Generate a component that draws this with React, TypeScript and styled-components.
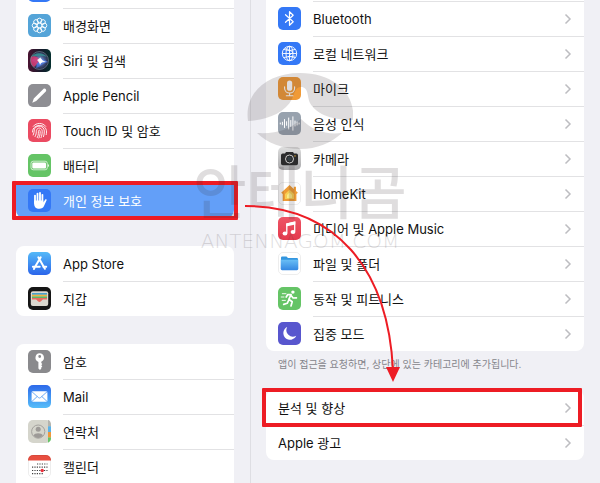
import React from "react";
import styled, { createGlobalStyle, css } from "styled-components";

const GlobalStyle = createGlobalStyle`
  *, *::before, *::after { box-sizing: border-box; }
  html, body, #root { height: 100%; }
  body {
    margin: 0;
    overflow: hidden;
    background: #f0f0f5;
    color: #111;
    font-family: Inter, "Noto Sans CJK KR", sans-serif;
    font-size: 13px;
  }
`;

const Screen = styled.main`
  position: relative;
  display: grid;
  grid-template-columns: 5fr 7fr;
  height: 100vh;
  overflow: hidden;
`;

const Pane = styled.nav<{ $divided?: boolean }>`
  display: flex;
  flex-direction: column;
  padding: 0 16px;
  min-width: 0;
  ${(p) =>
    p.$divided &&
    css`
      padding-left: 15px;
      border-left: 1px solid #dedee3;
    `}
`;

const corners = { top: "0 0 8px 8px", bottom: "8px 8px 0 0", none: "8px" };

const Group = styled.ul<{ $gap: number; $open?: "top" | "bottom" }>`
  flex: none;
  margin: ${(p) => p.$gap}px 0 0;
  padding: 0;
  list-style: none;
  background: #fff;
  border-radius: ${(p) => corners[p.$open ?? "none"]};
`;

const Item = styled.li<{ $inset: number }>`
  position: relative;
  & + &::before {
    content: "";
    position: absolute;
    top: 0;
    left: ${(p) => p.$inset}px;
    right: 0;
    height: 1px;
    background: #e2e2e4;
  }
`;

const RowButton = styled.button<{ $active?: boolean; $marked?: boolean }>`
  position: relative;
  display: flex;
  align-items: center;
  gap: 12px;
  width: 100%;
  height: 35px;
  padding: 0 12px;
  border: 0;
  background: ${(p) => (p.$active ? "#639ff8" : "transparent")};
  border-radius: ${(p) => (p.$active ? "0 0 8px 8px" : "0")};
  color: ${(p) => (p.$active ? "#fff" : "inherit")};
  font: inherit;
  line-height: 20px;
  text-align: left;
  cursor: pointer;
  ${(p) =>
    p.$marked &&
    css`
      z-index: 1;
      &::after {
        content: "";
        position: absolute;
        inset: -2px ${p.$active ? -4 : 2}px -2px -4px;
        border: 4px solid #ed1c24;
        border-radius: 1px;
      }
    `}
`;

const RowLabel = styled.span`
  flex: 1;
  min-width: 0;
  white-space: nowrap;
`;

const Tile = styled.svg`
  flex: none;
  width: 23px;
  height: 23px;
  display: block;
`;

const Chevron = styled.svg`
  flex: none;
  width: 8px;
  height: 12px;
`;

const Footnote = styled.p`
  margin: 4px 0 0;
  padding: 0 12px;
  color: #85858b;
  font-size: 10px;
  line-height: 18px;
  white-space: nowrap;
`;

const Watermark = styled.div`
  position: absolute;
  z-index: 2;
  top: 73px;
  left: 0;
  width: 100%;
  display: flex;
  flex-direction: column;
  align-items: center;
  color: #3c3237;
  opacity: 0.16;
  pointer-events: none;
`;

const WatermarkLogo = styled.svg`
  width: 106px;
  height: 76px;
`;

const WatermarkName = styled.span`
  margin-top: 8px;
  font-family: "Noto Sans CJK KR", sans-serif;
  font-size: 58px;
  font-weight: 500;
  line-height: 64px;
  white-space: nowrap;
`;

const WatermarkSite = styled.span`
  margin-top: 8px;
  font-family: "DejaVu Sans", sans-serif;
  font-size: 20px;
  font-weight: 200;
  line-height: 24px;
  white-space: nowrap;
`;

const Arrow = styled.svg`
  position: absolute;
  z-index: 3;
  top: 0;
  left: 0;
  width: 600px;
  height: 483px;
  pointer-events: none;
`;

type IconName =
  | "display" | "wallpaper" | "siri" | "pencil" | "touch" | "battery" | "hand"
  | "appstore" | "wallet" | "key" | "mail" | "contacts" | "calendar"
  | "wifi" | "bluetooth" | "globe" | "mic" | "speech" | "camera" | "home" | "music"
  | "files" | "fitness" | "moon";

const fills: Record<IconName, string> = {
  display: "#3478f6", wallpaper: "#54a4d8", siri: "url(#siri)", pencil: "#8e8e93",
  touch: "#eb4b62", battery: "#65c466", hand: "#3478f6", appstore: "url(#store)",
  wallet: "#151515", key: "#8a8a8d", mail: "url(#mail)", contacts: "#d5d5cc",
  calendar: "#fff", wifi: "#3478f6", bluetooth: "#3478f6", globe: "#3478f6", mic: "#f09a37",
  speech: "#98a2ae", camera: "url(#cam)", home: "#fff", music: "url(#music)",
  files: "#fff", fitness: "#65c466", moon: "#5856ce",
};

const petals = [0, 45, 90, 135, 180, 225, 270, 315];

const art: Record<IconName, React.ReactNode> = {
  display: null,
  wifi: null,
  wallpaper: (
    <g fill="none" stroke="#fff" strokeWidth="0.9">
      {petals.map((a) => (
        <circle key={a} cx="11.5" cy="6.5" r="2.3" transform={`rotate(${a} 11.5 11.5)`} />
      ))}
      <circle cx="11.5" cy="11.5" r="2.3" />
    </g>
  ),
  siri: (
    <>
      <circle cx="11.5" cy="11.5" r="9.3" fill="url(#orb)" />
      <path d="M3 8C7 3 15 3 19 8C14 6 9 7 3 8Z" fill="#36a99c" opacity=".65" />
      <path d="M3 12C8 7 14 9 20 13C15 14 12 18 8 19C10 15 8 13 3 12Z" fill="#4d7bea" opacity=".75" />
      <path d="M3 8C8 6 11 9 12.5 12C9 13 8 17 6 18C3 16 1.6 12 3 8Z" fill="#dc3a72" opacity=".85" />
      <path d="M9 11L12.5 8.5L14 11L18 13L13.5 13.5L12 16L11 13Z" fill="#fff" opacity=".9" />
      <circle cx="12.5" cy="12" r="2" fill="#fff" />
      <circle cx="11.5" cy="11.5" r="9" fill="none" stroke="#86a4ae" strokeWidth=".7" opacity=".7" />
    </>
  ),
  pencil: (
    <path d="M4.3 18.7L5.8 14.6L15.4 4.9C16.9 3.6 19.2 5.8 17.8 7.4L8.2 17.1ZM4.3 18.7L5.8 14.6L8.2 17.1Z" fill="#fff" />
  ),
  touch: (
    <g fill="none" stroke="#fff" strokeWidth=".9" strokeLinecap="round">
      <path d="M5.3 7.3C8.2 3.4 14.8 3.4 17.7 7.3" />
      <path d="M4.5 13C4.1 4.2 18.9 4.2 18.5 13C18.5 14 18.4 14.8 18.2 15.6" />
      <path d="M5.2 16C6.8 12.2 5.7 11.3 6.8 9.4C9 5.7 16.2 6.6 16.3 12.1C16.4 14.3 16 16 15.5 17.6" />
      <path d="M7.1 17.5C9.3 13.2 7.5 12.3 9 10.2C10.6 8.1 14.3 9 14.2 12.4C14.1 15 13.8 16.9 13 18.7" />
      <path d="M9.3 18.6C11.1 15.6 10 12.7 10.6 11.6C11.3 10.5 12.3 11.2 12.2 12.7C12.1 15 11.9 17 10.9 19" />
    </g>
  ),
  battery: (
    <>
      <rect x="3" y="7.2" width="16.3" height="8.6" rx="2.2" fill="none" stroke="#fff" strokeWidth=".9" opacity=".75" />
      <rect x="4.3" y="8.5" width="13.7" height="6" rx="1.1" fill="#fff" />
      <path d="M20.1 9.9C21.3 10.4 21.3 12.6 20.1 13.1Z" fill="#fff" />
    </>
  ),
  hand: (
    <>
      <path d="M7 6.6V14M9.5 4.6V14M12 4V13M14.4 5.8V14" stroke="#fff" strokeWidth="1.8" strokeLinecap="round" />
      <path d="M6.1 11.5H15.3V13.4C16 12.7 16.6 11.3 17.2 10.6C17.8 9.9 18.9 10.4 18.6 11.3L16 17C15.2 18.8 13.8 19.8 11.4 19.8C7.8 19.8 6.1 17.8 6.1 14.2Z" fill="#fff" />
    </>
  ),
  appstore: (
    <g stroke="#fff" strokeWidth="2" strokeLinecap="round" fill="none">
      <path d="M12.7 5.3L7.4 14.3M10.3 5.3L16.9 16.8" />
      <path d="M4.9 14.8H11.7M15.4 14.8H18.2M6.4 16.2L5.9 17" />
    </g>
  ),
  wallet: (
    <>
      <rect x="2.8" y="4.2" width="17.4" height="14.8" rx="2" fill="#dbd8cf" />
      <path d="M4 6H19V7.8H4Z" fill="#4aa0c8" />
      <path d="M4 7.8H19V9.4H4Z" fill="#eeb33d" />
      <path d="M4 9.4H19V11H4Z" fill="#60b665" />
      <path d="M4 11H19V12.6H15C13.8 12.6 13.5 15 11.5 15S9.2 12.6 8 12.6H4Z" fill="#e96a5e" />
    </>
  ),
  key: (
    <path fillRule="evenodd" d="M11.6 3.2A4.5 4.5 0 0 1 13.3 11.8V13L14.3 14.1L13.3 15.3L14.3 16.5L13.3 17.6V18.6L12 20L10.4 18.6V11.9A4.5 4.5 0 0 1 11.6 3.2ZM11.7 5.1A1.4 1.4 0 1 0 11.7 7.9A1.4 1.4 0 1 0 11.7 5.1Z" fill="#fff" />
  ),
  mail: (
    <>
      <rect x="3.6" y="6.3" width="15.8" height="10.5" rx="1.4" fill="#fff" />
      <path d="M4 6.8L10.5 12.6Q11.5 13.4 12.5 12.6L19 6.8M4 16.4L9.2 11.5M19 16.4L13.8 11.5" fill="none" stroke="#4b98f3" strokeWidth=".8" />
    </>
  ),
  contacts: (
    <>
      <path d="M20 0H20A3 5 0 0 1 23 5V6.5H20Z" fill="#b4b4ae" />
      <path d="M20 6.3H23V12H20Z" fill="#59b2e9" />
      <path d="M20 12H23V17.6H20Z" fill="#ee983b" />
      <path d="M20 17.6H23V18A5 5 0 0 1 20 22.7Z" fill="#65c466" />
      <circle cx="10.2" cy="11.6" r="6.6" fill="none" stroke="#a4a29e" strokeWidth="1" />
      <circle cx="10.2" cy="9.3" r="2.5" fill="#9d9a97" />
      <path d="M5.5 15.5C6.7 12.6 13.7 12.6 14.9 15.5C12.5 18.7 7.9 18.7 5.5 15.5Z" fill="#9d9a97" />
    </>
  ),
  calendar: (
    <>
      <path d="M0 5A5 5 0 0 1 5 0H18A5 5 0 0 1 23 5V5.4H0Z" fill="#e84e40" />
      <path d="M9 9H19.5M4 12.2H19.5M4 15.5H19.5M4 18.7H15" stroke="#404040" strokeWidth="1.2" strokeDasharray="1.2 1.2" />
      <circle cx="14.2" cy="15.5" r="1.7" fill="#ed2f3c" />
    </>
  ),
  bluetooth: (
    <path d="M7.5 7.7L15.2 14.8L11.5 18.3V4.7L15.2 8.2L7.5 15.3" fill="none" stroke="#fff" strokeWidth="1.2" strokeLinejoin="round" strokeLinecap="round" />
  ),
  globe: (
    <g fill="none" stroke="#fff" strokeWidth=".9">
      <circle cx="11.5" cy="11.5" r="7.2" />
      <ellipse cx="11.5" cy="11.5" rx="3.5" ry="7.2" />
      <path d="M11.5 4.3V18.7M4.3 11.5H18.7M5.6 7.4Q11.5 9.9 17.4 7.4M5.6 15.6Q11.5 13.1 17.4 15.6" />
      <path d="M7 6L15 10L10 15L17 14" strokeWidth=".7" />
    </g>
  ),
  mic: (
    <>
      <rect x="9" y="3.4" width="5.2" height="10.4" rx="2.6" fill="#fff" />
      <path d="M6.6 9.8V11.3C6.6 17.6 16.6 17.6 16.6 11.3V9.8M11.6 16V18.6M8.3 18.8H14.9" fill="none" stroke="#fff" strokeWidth="1.1" strokeLinecap="round" />
    </>
  ),
  speech: (
    <path d="M2.3 11V12M4.4 10.2V12.8M6.5 7.5V15.5M8.6 9.7V13.3M10.7 6V17M12.8 8.5V14.5M14.9 4.8V18.2M17 9V14M19.1 10V13M21.1 11V12" stroke="#fff" strokeWidth="1" strokeLinecap="round" />
  ),
  camera: (
    <>
      <path d="M3 8.3A1.7 1.7 0 0 1 4.7 6.6H7L8 4.9H15L16 6.6H18.3A1.7 1.7 0 0 1 20 8.3V16.5A1.7 1.7 0 0 1 18.3 18.2H4.7A1.7 1.7 0 0 1 3 16.5Z" fill="#2b2b2c" />
      <circle cx="11.5" cy="12" r="4" fill="#242424" stroke="#ccc" strokeWidth="1" />
      <circle cx="11.5" cy="12" r="2.4" fill="#343d42" />
      <circle cx="17" cy="8.9" r=".7" fill="#f7bb31" />
    </>
  ),
  home: (
    <>
      <path d="M3.2 10.8L11.5 3L15.8 7V4.8H18V9.1L19.9 10.8L18.4 12V19H4.7V12Z" fill="#ee9b35" />
      <path d="M7 12L11.5 7.7L16 12V17H7Z" fill="#f8ce54" />
      <path d="M9 13L11.5 10.6L14 13V16H9Z" fill="#fceb86" />
    </>
  ),
  music: (
    <>
      <path d="M8.8 15.9V7L16.7 5.2V14.5" fill="none" stroke="#fff" strokeWidth="1.3" />
      <path d="M8.2 6.4L17.3 4.3V7.5L8.2 9.5Z" fill="#fff" />
      <ellipse cx="7" cy="16.5" rx="2.4" ry="2" fill="#fff" />
      <ellipse cx="15" cy="14.9" rx="2.4" ry="2" fill="#fff" />
    </>
  ),
  files: (
    <>
      <path d="M3 5.7Q3 4.6 4.1 4.6H8.5L10 6H18.9Q20 6 20 7.1V10H3Z" fill="#3396df" />
      <path d="M2.7 7.8H20.3V16.8Q20.3 18.2 18.9 18.2H4.1Q2.7 18.2 2.7 16.8Z" fill="url(#folder)" />
    </>
  ),
  fitness: (
    <>
      <circle cx="14.9" cy="5.1" r="1.7" fill="#fff" />
      <path d="M8.2 10L9.8 7.5L13.1 7.7L10.8 12.3L14.2 14.8L13 19M10.5 13.6L9.2 16.3L5.7 17.4M13.3 8.8L15.1 11L18.4 10.8" fill="none" stroke="#fff" strokeWidth="1.7" strokeLinecap="round" strokeLinejoin="round" />
      <path d="M4.3 6.7H8M3.2 10H6M4.2 13.4H7.4" stroke="#fff" strokeWidth=".9" strokeLinecap="round" />
    </>
  ),
  moon: (
    <path d="M9.2 5A6.7 6.7 0 1 0 18.2 13.7A6.5 6.5 0 0 1 9.2 5Z" fill="#fff" />
  ),
};

const pale: IconName[] = ["calendar", "home", "files"];

function Icon({ name }: { name: IconName }) {
  return (
    <Tile viewBox="0 0 23 23" aria-hidden="true">
      <rect width="23" height="23" rx="5" fill={fills[name]} />
      {art[name]}
      {pale.includes(name) && (
        <rect x=".5" y=".5" width="22" height="22" rx="4.5" fill="none" stroke="#000" strokeOpacity=".07" />
      )}
    </Tile>
  );
}

const HiddenDefs = styled.svg`
  position: absolute;
  width: 0;
  height: 0;
`;

function Gradients() {
  return (
    <HiddenDefs aria-hidden="true">
      <defs>
        <linearGradient id="siri"><stop stopColor="#4a1331" /><stop offset=".6" stopColor="#141a2b" /><stop offset="1" stopColor="#06302f" /></linearGradient>
        <radialGradient id="orb"><stop stopColor="#8fb3e5" /><stop offset=".6" stopColor="#40527f" /><stop offset="1" stopColor="#24243b" /></radialGradient>
        <linearGradient id="store" x2="0" y2="1"><stop stopColor="#54b9f8" /><stop offset="1" stopColor="#2b65ea" /></linearGradient>
        <linearGradient id="mail" x2="0" y2="1"><stop stopColor="#2d69ea" /><stop offset="1" stopColor="#56bdf9" /></linearGradient>
        <linearGradient id="cam" x2="0" y2="1"><stop stopColor="#dedede" /><stop offset="1" stopColor="#a9a9ab" /></linearGradient>
        <linearGradient id="music" x2="0" y2="1"><stop stopColor="#ee5566" /><stop offset="1" stopColor="#e43a4d" /></linearGradient>
        <linearGradient id="folder" x2="0" y2="1"><stop stopColor="#69bef5" /><stop offset="1" stopColor="#3487e2" /></linearGradient>
      </defs>
    </HiddenDefs>
  );
}

interface RowProps {
  label?: string;
  icon?: IconName;
  active?: boolean;
  marked?: boolean;
  chevron?: boolean;
}

function Row({ label, icon, active, marked, chevron }: RowProps) {
  return (
    <Item $inset={icon ? 47 : 12}>
      <RowButton
        type="button"
        $active={active}
        $marked={marked}
        aria-label={label ?? icon}
        aria-current={active ? "page" : undefined}
      >
        {icon && <Icon name={icon} />}
        <RowLabel>{label}</RowLabel>
        {chevron && (
          <Chevron viewBox="0 0 8 12" aria-hidden="true">
            <path d="M1.5 1.5L6 6L1.5 10.5" fill="none" stroke="#bdbdc1" strokeWidth="1.5" />
          </Chevron>
        )}
      </RowButton>
    </Item>
  );
}

const general: RowProps[] = [
  { icon: "display" },
  { label: "배경화면", icon: "wallpaper" },
  { label: "Siri 및 검색", icon: "siri" },
  { label: "Apple Pencil", icon: "pencil" },
  { label: "Touch ID 및 암호", icon: "touch" },
  { label: "배터리", icon: "battery" },
  { label: "개인 정보 보호", icon: "hand", active: true, marked: true },
];

const store: RowProps[] = [
  { label: "App Store", icon: "appstore" },
  { label: "지갑", icon: "wallet" },
];

const apps: RowProps[] = [
  { label: "암호", icon: "key" },
  { label: "Mail", icon: "mail" },
  { label: "연락처", icon: "contacts" },
  { label: "캘린더", icon: "calendar" },
];

const permissions: RowProps[] = [
  { icon: "wifi" },
  { label: "Bluetooth", icon: "bluetooth" },
  { label: "로컬 네트워크", icon: "globe" },
  { label: "마이크", icon: "mic" },
  { label: "음성 인식", icon: "speech" },
  { label: "카메라", icon: "camera" },
  { label: "HomeKit", icon: "home" },
  { label: "미디어 및 Apple Music", icon: "music" },
  { label: "파일 및 폴더", icon: "files" },
  { label: "동작 및 피트니스", icon: "fitness" },
  { label: "집중 모드", icon: "moon" },
];

const analytics: RowProps[] = [
  { label: "분석 및 향상", marked: true },
  { label: "Apple 광고" },
];

export default function App() {
  return (
    <>
      <GlobalStyle />
      <Gradients />
      <Screen>
        <Pane aria-label="설정">
          <Group $gap={-27} $open="top">{general.map((r) => <Row key={r.icon} {...r} />)}</Group>
          <Group $gap={28}>{store.map((r) => <Row key={r.label} {...r} />)}</Group>
          <Group $gap={28} $open="bottom">{apps.map((r) => <Row key={r.label} {...r} />)}</Group>
        </Pane>
        <Pane $divided aria-label="개인 정보 보호">
          <Group $gap={-34} $open="top">{permissions.map((r) => <Row key={r.icon} {...r} chevron />)}</Group>
          <Footnote>앱이 접근을 요청하면, 상단에 있는 카테고리에 추가됩니다.</Footnote>
          <Group $gap={17}>{analytics.map((r) => <Row key={r.label} {...r} chevron />)}</Group>
        </Pane>
        <Watermark>
          <WatermarkLogo viewBox="0 0 106 76" aria-hidden="true">
            <path d="M1 48C-3 20 20 0 53 0S109 20 106 47C86 47 70 42 63 30C60 24 62 14 54 14C48 14 48 20 45 26C38 40 20 47 1 48Z" fill="currentColor" />
            <path d="M10 60C30 61 42 57 54 46C65 57 78 62 95 60C84 70 70 76 53 76S20 70 10 60Z" fill="currentColor" />
          </WatermarkLogo>
          <WatermarkName>안테니곰</WatermarkName>
          <WatermarkSite>ANTENNAGOM.COM</WatermarkSite>
        </Watermark>
        <Arrow viewBox="0 0 600 483" aria-hidden="true">
          <path d="M245 206C335 206 388 268 393 370" fill="none" stroke="#ed1c24" strokeWidth="2" />
          <path d="M386 367H400L393 382Z" fill="#ed1c24" />
        </Arrow>
      </Screen>
    </>
  );
}
